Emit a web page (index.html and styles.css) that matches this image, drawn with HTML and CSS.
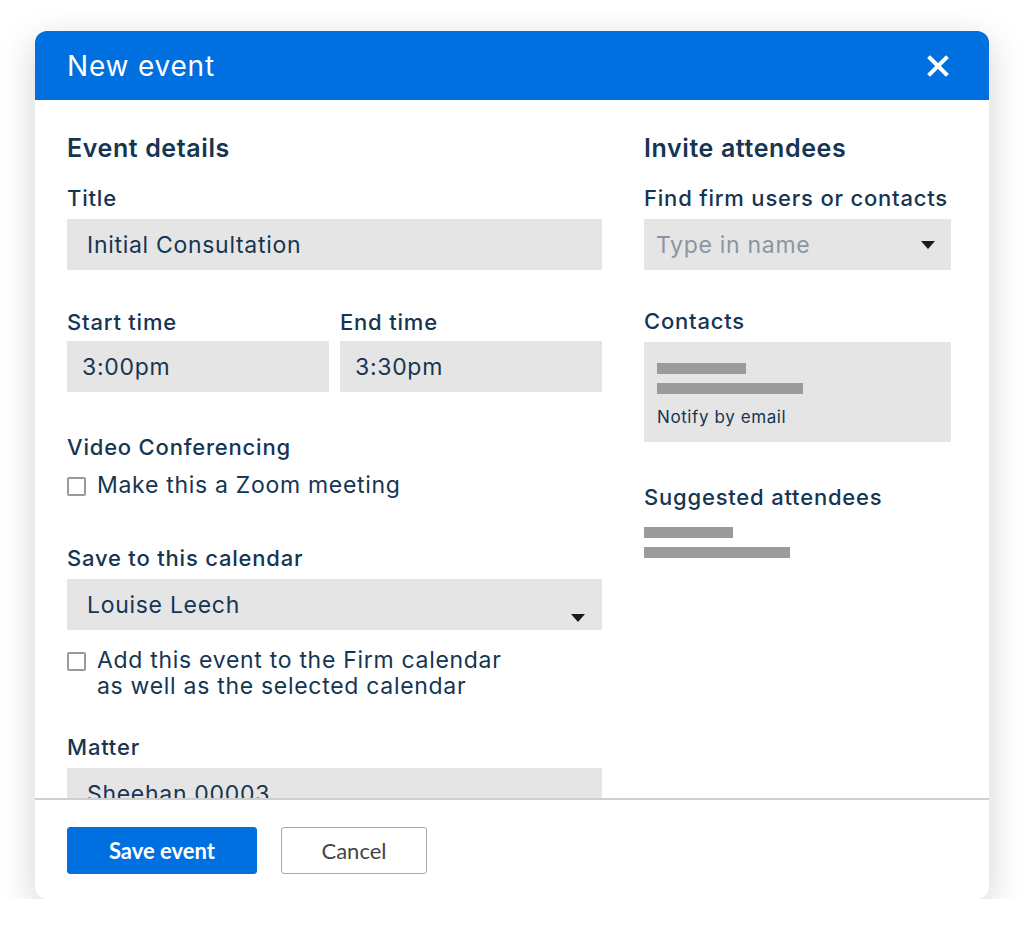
FILE: index.html
```html
<!DOCTYPE html>
<html>
<head>
    <title>New event</title>
    <link rel="stylesheet" href="styles.css">
</head>
<body>
    <div class="dialog">
        <div class="dialog-header">
            <h1>New event</h1>
            <button class="close" aria-label="Close">
                <svg width="22" height="22" viewBox="0 0 22 22">
                    <path d="M3 3 L19 19 M19 3 L3 19" stroke="#fff" stroke-width="4" stroke-linecap="square"/>
                </svg>
            </button>
        </div>

        <div class="dialog-body">
            <!-- Left column: event fields -->
            <div class="column">
                <h2>Event details</h2>

                <div class="field first">
                    <label>Title</label>
                    <div class="input">Initial Consultation</div>
                </div>

                <div class="field row">
                    <div class="half">
                        <label>Start time</label>
                        <div class="input">3:00pm</div>
                    </div>
                    <div class="half">
                        <label>End time</label>
                        <div class="input">3:30pm</div>
                    </div>
                </div>

                <div class="field video">
                    <label>Video Conferencing</label>
                    <div class="check">
                        <span class="box"></span>
                        <span>Make this a Zoom meeting</span>
                    </div>
                </div>

                <div class="field calendar">
                    <label>Save to this calendar</label>
                    <div class="input select">
                        Louise Leech
                        <span class="caret low"></span>
                    </div>
                    <div class="check two-line">
                        <span class="box"></span>
                        <span>Add this event to the Firm calendar<br>as well as the selected calendar</span>
                    </div>
                </div>

                <div class="field matter">
                    <label>Matter</label>
                    <div class="input">Sheehan 00003</div>
                </div>
            </div>

            <!-- Right column: attendees -->
            <div class="column">
                <h2>Invite attendees</h2>

                <div class="field first">
                    <label>Find firm users or contacts</label>
                    <div class="input select placeholder">
                        Type in name
                        <span class="caret"></span>
                    </div>
                </div>

                <div class="field">
                    <label>Contacts</label>
                    <div class="contacts">
                        <span class="bar short"></span>
                        <span class="bar long"></span>
                        <span class="notify">Notify by email</span>
                    </div>
                </div>

                <div class="field suggested">
                    <label>Suggested attendees</label>
                    <span class="bar short"></span>
                    <span class="bar long"></span>
                </div>
            </div>
        </div>

        <div class="dialog-footer">
            <button class="btn primary">Save event</button>
            <button class="btn">Cancel</button>
        </div>
    </div>
</body>
</html>
```

FILE: styles.css
```css
body {
    margin: 0;
    background: #fff;
    font-family: Inter, "Noto Sans", sans-serif;
    color: #163552;
}
.dialog {
    margin: 31px 0 0 35px;
    width: 954px;
    height: 868px;
    background: #fff;
    border-radius: 12px;
    box-shadow: 0 10px 36px rgba(0, 0, 0, 0.18);
    display: flex;
    flex-direction: column;
    overflow: hidden;
}
.dialog-header {
    height: 69px;
    flex: none;
    background: #0070e0;
    display: flex;
    align-items: center;
    justify-content: space-between;
    padding: 0 38px 0 32px;
}
.dialog-header h1 {
    margin: 0;
    color: #fff;
    font-size: 28px;
    letter-spacing: 0.8px;
    font-weight: 400;
}
.close {
    background: none;
    border: none;
    padding: 0;
    display: flex;
    margin-right: 2px;
}
.dialog-body {
    flex: 1;
    overflow: hidden;
    display: grid;
    grid-template-columns: 535px 307px;
    column-gap: 42px;
    padding: 0 32px;
    border-bottom: 2px solid #cfcfcf;
}
h2 {
    margin: 33px 0 0;
    font-size: 25px;
    line-height: 30px;
    letter-spacing: 0.6px;
    font-weight: 600;
}
label {
    display: block;
    font-size: 22px;
    line-height: 26px;
    letter-spacing: 0.8px;
    font-weight: 500;
    margin-bottom: 8px;
}
.field {
    margin-top: 38px;
}
.field.first {
    margin-top: 22px;
}
.field.row {
    margin-top: 39px;
}
.row label {
    margin-bottom: 6px;
}
.field.video {
    margin-top: 42px;
}
.field.calendar {
    margin-top: 47px;
}
.field.matter {
    margin-top: 35px;
}
.field.suggested {
    margin-top: 42px;
}
.row {
    display: flex;
    gap: 11px;
}
.half {
    flex: 1;
}
.input {
    position: relative;
    height: 51px;
    background: #e5e5e5;
    padding: 0 20px;
    display: flex;
    align-items: center;
    font-size: 23px;
    letter-spacing: 0.7px;
    box-sizing: border-box;
}
.row .input {
    padding-left: 15px;
}
.select.placeholder {
    color: #8a96a1;
    padding-left: 12px;
}
/* dropdown triangle */
.caret {
    position: absolute;
    right: 16px;
    top: 22px;
    border-left: 7px solid transparent;
    border-right: 7px solid transparent;
    border-top: 8px solid #1a1a1a;
}
.caret.low {
    right: 17px;
    top: 35px;
}
.check {
    display: flex;
    align-items: flex-start;
    gap: 11px;
    font-size: 23px;
    line-height: 26px;
    letter-spacing: 0.7px;
    margin-top: 12px;
}
.check.two-line {
    margin-top: 17px;
}
.box {
    flex: none;
    width: 15px;
    height: 15px;
    margin-top: 5px;
    border: 2px solid #9a9a9a;
    border-radius: 2px;
    background: #fff;
}
.contacts {
    height: 100px;
    background: #e5e5e5;
    padding: 21px 13px 0;
    box-sizing: border-box;
    display: flex;
    flex-direction: column;
    align-items: flex-start;
}
.bar {
    display: block;
    height: 11px;
    background: #9b9b9b;
}
.bar.short {
    width: 89px;
}
.bar.long {
    width: 146px;
    margin-top: 9px;
}
.suggested label {
    margin-bottom: 17px;
}
.notify {
    font-size: 17px;
    line-height: 20px;
    letter-spacing: 0.6px;
    margin-top: 13px;
}
.dialog-footer {
    height: 99px;
    flex: none;
    display: flex;
    align-items: flex-start;
    gap: 24px;
    padding: 27px 32px 0;
    box-sizing: border-box;
}
.btn {
    height: 47px;
    width: 146px;
    border: 1px solid #a9a9a9;
    border-radius: 3px;
    background: #fff;
    color: #444;
    font-family: Lato, "Open Sans", sans-serif;
    font-size: 22px;
}
.btn.primary {
    width: 190px;
    background: #0070e0;
    border-color: #0070e0;
    color: #fff;
    font-weight: 700;
}
```
